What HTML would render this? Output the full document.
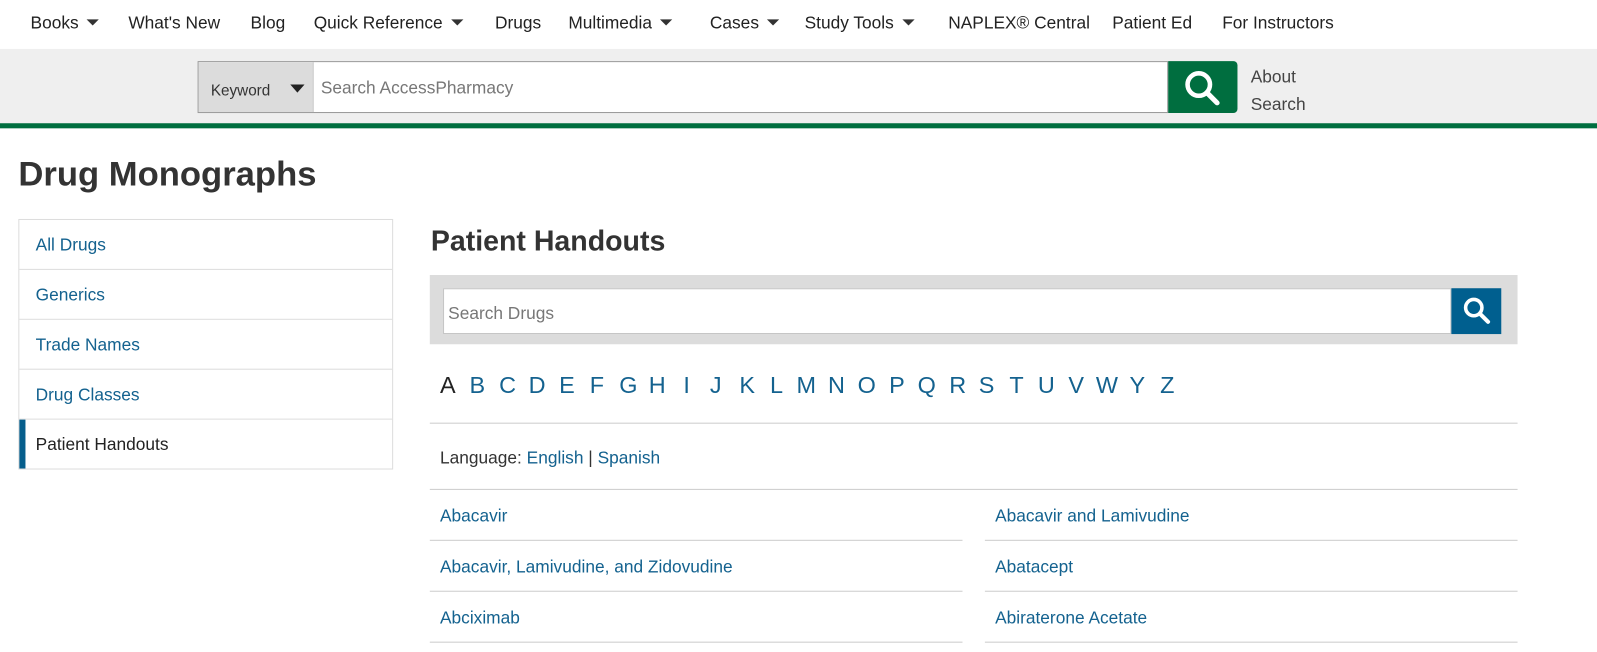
<!DOCTYPE html>
<html><head><meta charset="utf-8"><style>
*{margin:0;padding:0;box-sizing:border-box}
body{width:1597px;height:647px;overflow:hidden;background:#fff;font-family:"Liberation Sans",sans-serif;color:#333;position:relative}
#w{position:absolute;left:0;top:0;width:1568px;height:640px;transform:scale(1.0185);transform-origin:0 0}
.a{position:absolute;white-space:nowrap}
.nav{font-size:17px;top:13px;color:#222}
.car{display:inline-block;width:0;height:0;border-left:6px solid transparent;border-right:6px solid transparent;border-top:6px solid #333;margin-left:8px;vertical-align:3px}
.lnk{color:#14628f}
.side{position:absolute;left:18px;top:215px;width:368px;border:1px solid #ddd}
.side div{height:49px;border-bottom:1px solid #ddd;padding-left:16px;line-height:50px;font-size:17px;color:#14628f}
.side div:last-child{border-bottom:none;color:#222;border-left:6px solid #065e8c;padding-left:10px;height:48px}
.let{position:absolute;top:365px;font-size:23px;color:#14628f}
.hr{position:absolute;height:1px;background:#ccc}
.it{position:absolute;font-size:17px;color:#14628f}
</style></head><body><div id="w">
<span class="a nav" style="left:30px">Books<span class="car"></span></span>
<span class="a nav" style="left:126px">What's New</span>
<span class="a nav" style="left:246px">Blog</span>
<span class="a nav" style="left:308px">Quick Reference<span class="car"></span></span>
<span class="a nav" style="left:486px">Drugs</span>
<span class="a nav" style="left:558px">Multimedia<span class="car"></span></span>
<span class="a nav" style="left:697px">Cases<span class="car"></span></span>
<span class="a nav" style="left:790px">Study Tools<span class="car"></span></span>
<span class="a nav" style="left:931px">NAPLEX® Central</span>
<span class="a nav" style="left:1092px">Patient Ed</span>
<span class="a nav" style="left:1200px">For Instructors</span>

<div class="a" style="left:0;top:48px;width:1597px;height:73px;background:#efefef"></div>
<div class="a" style="left:0;top:121px;width:1597px;height:5px;background:#006e3f"></div>
<div class="a" style="left:194px;top:60px;width:953px;height:51px;background:#fff;border:1px solid #999"></div>
<div class="a" style="left:195px;top:61px;width:113px;height:49px;background:#dcdcdc;border-right:1px solid #ccc"></div>
<span class="a" style="left:207px;top:81px;font-size:15px;color:#333">Keyword</span>
<div class="a" style="left:285px;top:83px;border-left:7px solid transparent;border-right:7px solid transparent;border-top:8px solid #222"></div>
<span class="a" style="left:315px;top:77px;font-size:17px;color:#777">Search AccessPharmacy</span>
<div class="a" style="left:1147px;top:60px;width:68px;height:51px;background:#006e3f;border-radius:0 4px 4px 0"></div>
<svg class="a" style="left:1160px;top:66px" width="42" height="40" viewBox="0 0 42 40"><circle cx="17" cy="17" r="11" fill="none" stroke="#fff" stroke-width="4.5"/><line x1="25" y1="25" x2="35" y2="35" stroke="#fff" stroke-width="5" stroke-linecap="round"/></svg>
<span class="a" style="left:1228px;top:62px;font-size:17px;color:#444;line-height:27px">About<br>Search</span>

<span class="a" style="left:18px;top:152px;font-size:34px;font-weight:bold;color:#333">Drug Monographs</span>
<div class="side"><div>All Drugs</div><div>Generics</div><div>Trade Names</div><div>Drug Classes</div><div>Patient Handouts</div></div>

<span class="a" style="left:423px;top:221px;font-size:28px;font-weight:bold;color:#333">Patient Handouts</span>
<div class="a" style="left:422px;top:270px;width:1068px;height:68px;background:#dcdcdc"></div>
<div class="a" style="left:435px;top:283px;width:990px;height:45px;background:#fff;border:1px solid #c4c4c4"></div>
<span class="a" style="left:440px;top:298px;font-size:17px;color:#777">Search Drugs</span>
<div class="a" style="left:1425px;top:283px;width:49px;height:45px;background:#005f8f"></div>
<svg class="a" style="left:1433px;top:288px" width="34" height="34" viewBox="0 0 34 34"><circle cx="14" cy="14" r="8" fill="none" stroke="#fff" stroke-width="3.5"/><line x1="20" y1="20" x2="28" y2="28" stroke="#fff" stroke-width="4" stroke-linecap="round"/></svg>

<span class="let" style="left:432px;color:#222">A</span>
<span class="let" style="left:461px">B</span><span class="let" style="left:490px">C</span><span class="let" style="left:519px">D</span><span class="let" style="left:549px">E</span><span class="let" style="left:579px">F</span><span class="let" style="left:608px">G</span><span class="let" style="left:637px">H</span><span class="let" style="left:671px">I</span><span class="let" style="left:697px">J</span><span class="let" style="left:726px">K</span><span class="let" style="left:756px">L</span><span class="let" style="left:782px">M</span><span class="let" style="left:813px">N</span><span class="let" style="left:842px">O</span><span class="let" style="left:873px">P</span><span class="let" style="left:901px">Q</span><span class="let" style="left:932px">R</span><span class="let" style="left:961px">S</span><span class="let" style="left:991px">T</span><span class="let" style="left:1019px">U</span><span class="let" style="left:1049px">V</span><span class="let" style="left:1076px">W</span><span class="let" style="left:1109px">Y</span><span class="let" style="left:1139px">Z</span>
<div class="hr" style="left:422px;top:415px;width:1068px"></div>
<span class="a" style="left:432px;top:440px;font-size:17px;color:#333">Language: <span class="lnk">English</span> | <span class="lnk">Spanish</span></span>
<div class="hr" style="left:422px;top:480px;width:1068px"></div>

<span class="it" style="left:432px;top:497px">Abacavir</span>
<span class="it" style="left:977px;top:497px">Abacavir and Lamivudine</span>
<div class="hr" style="left:422px;top:530px;width:523px"></div><div class="hr" style="left:967px;top:530px;width:523px"></div>
<span class="it" style="left:432px;top:547px">Abacavir, Lamivudine, and Zidovudine</span>
<span class="it" style="left:977px;top:547px">Abatacept</span>
<div class="hr" style="left:422px;top:580px;width:523px"></div><div class="hr" style="left:967px;top:580px;width:523px"></div>
<span class="it" style="left:432px;top:597px">Abciximab</span>
<span class="it" style="left:977px;top:597px">Abiraterone Acetate</span>
<div class="hr" style="left:422px;top:630px;width:523px"></div><div class="hr" style="left:967px;top:630px;width:523px"></div>
</div></body></html>
